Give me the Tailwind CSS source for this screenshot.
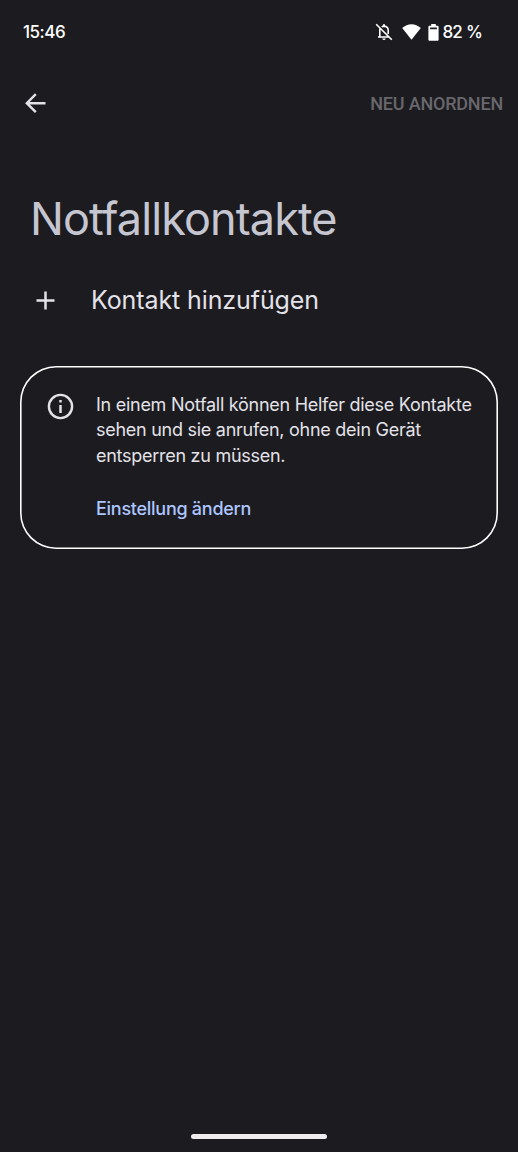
<!DOCTYPE html>
<html lang="de">
<head>
<meta charset="utf-8">
<title>Notfallkontakte</title>
<script src="https://cdn.jsdelivr.net/npm/@tailwindcss/browser@4"></script>
</head>
<body class="bg-[#1c1b20]">
<div class="flex h-[1152px] w-[518px] flex-col overflow-hidden bg-[#1c1b20] font-['Inter',sans-serif] text-[#e3e2e8]">
  <header class="flex h-16 shrink-0 items-center pl-[23px] pr-9 text-[17px] font-medium text-white">
    <span class="mt-0.5 whitespace-nowrap tracking-[-0.5px]">15:46</span>
    <div class="ml-auto flex items-center">
      <svg class="mr-[9px] size-[18px]" viewBox="0 0 18 18" fill="none" stroke="currentColor" stroke-width="1.6"><path d="M1.2 1.2 16.8 16.8M3 14H14M4.8 14V7.2Q4.8 6.2 5.2 5.4M6.8 4Q7.7 3.1 9 3.1Q13.2 3.3 13.2 7.5V11"/><path d="M9 1.2V3.2" stroke-width="2"/><path d="M7.3 15.4H10.7Q10.4 17 9 17T7.3 15.4Z" fill="currentColor" stroke="none"/></svg>
      <svg class="mr-[7px] h-4 w-[19px]" viewBox="0 0 19 16" fill="currentColor"><path d="M.2 4.1Q4.4.3 9.5.3T18.8 4.1L9.5 15.7Z"/></svg>
      <svg class="mr-[3px] h-[17px] w-[11px]" viewBox="0 0 11 17" fill="currentColor"><path fill-rule="evenodd" d="M3.2 0H7.8V1.8H9.6Q10.6 1.8 10.6 2.8V15.8Q10.6 16.8 9.6 16.8H1.4Q.4 16.8.4 15.8V2.8Q.4 1.8 1.4 1.8H3.2ZM2.1 3.6V5.2H8.9V3.6Z"/></svg>
      <span class="mt-0.5 whitespace-nowrap tracking-[-0.95px] [word-spacing:0.8px]">82 %</span>
    </div>
  </header>
  <nav class="flex h-20 shrink-0 items-center justify-between pl-[25px] pr-[15px]">
    <svg class="-mt-px size-[21px]" viewBox="0 0 21 21" fill="none" stroke="currentColor" stroke-width="2.4"><path d="M10.8 1.2 1.8 10.2 10.8 19.2M2 10.2H20.5"/></svg>
    <span class="-mt-0.5 whitespace-nowrap font-['Roboto',sans-serif] text-[18px] font-medium tracking-[-0.2px] text-[#68676c]">NEU ANORDNEN</span>
  </nav>
  <main class="flex flex-col">
    <h1 class="mt-[45px] h-[60px] whitespace-nowrap pl-[30px] text-[45px] font-normal leading-[60px] tracking-[-0.9px] text-[#c5c6d0]">Notfallkontakte</h1>
    <div class="mt-[31px] flex h-10 items-center pl-9">
      <svg class="mr-9 size-[19px]" viewBox="0 0 19 19" fill="none" stroke="currentColor" stroke-width="2.5"><path d="M9.5.5V18.5M.5 9.5H18.5"/></svg>
      <span class="mt-0.5 whitespace-nowrap text-[25px] tracking-[-0.1px]">Kontakt hinzufügen</span>
    </div>
    <section class="mx-5 mt-[45.5px] flex h-[183px] rounded-[36px] pl-[27px] pt-[26px] shadow-[inset_0_0_0_1.6px_#fff]">
      <svg class="mr-[22px] mt-px size-[27px] shrink-0" viewBox="0 0 27 27" fill="none" stroke="currentColor"><circle cx="13.5" cy="13.5" r="11.6" stroke-width="2.4"/><path d="M13.5 12V20M13.5 7V9.6" stroke-width="2.5"/></svg>
      <div class="flex flex-col">
        <p class="whitespace-nowrap text-[18px] leading-[25.5px] tracking-[-0.27px]">In einem Notfall können Helfer diese Kontakte<br>sehen und sie anrufen, ohne dein Gerät<br>entsperren zu müssen.</p>
        <a class="mt-[27.5px] whitespace-nowrap text-[18px] font-medium leading-[26px] tracking-[-0.27px] text-[#adc6ff]">Einstellung ändern</a>
      </div>
    </section>
  </main>
  <footer class="mt-auto flex h-[18px] justify-center"><div class="h-[5px] w-[136px] rounded-full bg-[#eeecef]"></div></footer>
</div>
</body>
</html>
